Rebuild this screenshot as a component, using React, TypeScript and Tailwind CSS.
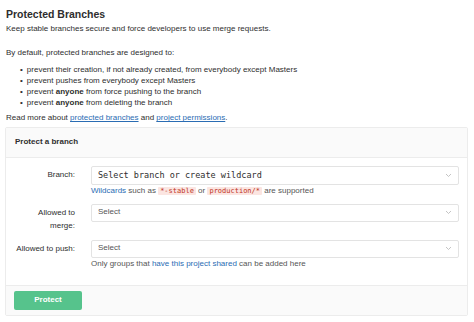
import React from "react";

const Chevron = () => (
  <svg width="7" height="5" viewBox="0 0 7 5" className="text-[#b5b5b5]">
    <path d="M1 1l2.5 2.5L6 1" fill="none" stroke="currentColor" strokeWidth="0.8" />
  </svg>
);

// select-like box used in the form
const FakeSelect = ({ text, mono = false, h = "h-[19px]" }: { text: string; mono?: boolean; h?: string }) => (
  <div className={`flex ${h} items-center justify-between rounded-[2px] border border-[#e3e3e3] bg-white pl-[6px] pr-[6px]`}>
    <span
      className={
        mono
          ? "text-[8.5px] text-[#2e2e2e] [font-family:'DejaVu_Sans_Mono',monospace]"
          : "text-[8px] text-[#555]"
      }
    >
      {text}
    </span>
    <Chevron />
  </div>
);

const Code = ({ children }: { children: React.ReactNode }) => (
  <code className="rounded-[1px] bg-[#fbe5e1] px-[2px] text-[7px] text-[#c0341d] [font-family:'DejaVu_Sans_Mono',monospace]">
    {children}
  </code>
);

export default function App() {
  return (
    <div className="h-[322px] w-[474px] overflow-hidden bg-white text-[8px] leading-[10.7px] text-[#2e2e2e] [font-family:'Liberation_Sans',Arial,sans-serif]">
      <div className="px-[6px] pt-[7px]">
        <h3 className="text-[10.5px] leading-[14px] font-bold text-[#2e2e2e]">Protected Branches</h3>
        <p className="mt-[3px]">Keep stable branches secure and force developers to use merge requests.</p>
        <p className="mt-[13px]">By default, protected branches are designed to:</p>
        <ul className="mt-[7px] pl-[14px]">
          <li className="flex gap-[4px]"><span>•</span>prevent their creation, if not already created, from everybody except Masters</li>
          <li className="flex gap-[4px]"><span>•</span>prevent pushes from everybody except Masters</li>
          <li className="flex gap-[4px]"><span>•</span><span>prevent <b>anyone</b> from force pushing to the branch</span></li>
          <li className="flex gap-[4px]"><span>•</span><span>prevent <b>anyone</b> from deleting the branch</span></li>
        </ul>
        <p className="mt-[5px]">
          Read more about <a className="text-[#2a6cb3] underline">protected branches</a> and{" "}
          <a className="text-[#2a6cb3] underline">project permissions</a>.
        </p>
      </div>

      <div className="mx-[5px] mt-[3px] w-[463px] rounded-[2px] border border-[#ececec]">
        <div className="flex h-[30px] items-center border-b border-[#ececec] bg-[#fafafa] px-[9px] font-bold text-[#2e2e2e]">
          Protect a branch
        </div>

        <div className="px-[8px] pt-[8px] pb-[16px]">
          <div className="grid grid-cols-[61px_368px] gap-x-[16px]">
            <div className="pt-[4px] text-right">Branch:</div>
            <div>
              <FakeSelect text="Select branch or create wildcard" mono />
              <p className="mt-[1px] text-[#555]">
                <span className="text-[#2a6cb3]">Wildcards</span> such as <Code>*-stable</Code> or{" "}
                <Code>production/*</Code> are supported
              </p>
            </div>
          </div>

          <div className="mt-[7px] grid grid-cols-[61px_368px] gap-x-[16px]">
            <div className="pt-[2px] text-right leading-[13px]">
              Allowed to
              <br />
              merge:
            </div>
            <div>
              <FakeSelect text="Select" h="h-[18px]" />
            </div>
          </div>

          <div className="mt-[8px] grid grid-cols-[61px_368px] gap-x-[16px]">
            <div className="pt-[4px] text-right whitespace-nowrap">Allowed to push:</div>
            <div>
              <FakeSelect text="Select" h="h-[18px]" />
              <p className="mt-[1px] text-[#555]">
                Only groups that <span className="text-[#2a6cb3]">have this project shared</span> can be added here
              </p>
            </div>
          </div>
        </div>

        <div className="border-t border-[#ececec] bg-[#fafafa] px-[8px] pt-[5px] pb-[5px]">
          <button className="h-[19px] w-[68px] rounded-[2px] bg-[#56c38c] font-bold text-white">Protect</button>
        </div>
      </div>
    </div>
  );
}
